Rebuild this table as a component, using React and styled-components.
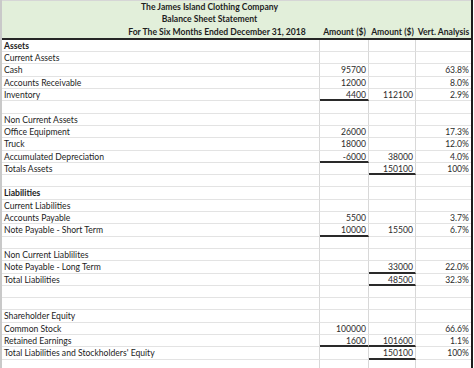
import * as React from 'react';
import styled, { createGlobalStyle } from 'styled-components';

const GlobalStyle = createGlobalStyle`
  html, body {
    margin: 0;
    padding: 0;
    background: #ffffff;
    overflow: hidden;
  }
  * { box-sizing: border-box; }
`;

const COLS = '318px 49px 47px 55px';

const Sheet = styled.div`
  width: 473px;
  border-left: 2px solid #c9c9c9;
  border-right: 2px solid #1c1c1c;
  font-family: Lato, "Liberation Sans", sans-serif;
  font-size: 8.6px;
  color: #1e1e1e;
`;

const Header = styled.div`
  background: #e2efda;
  border-top: 1px solid #d6d6d6;
  border-bottom: 2px solid #262626;
  font-weight: 700;
`;

const HeaderRow = styled.div`
  display: grid;
  grid-template-columns: ${COLS};
  height: 12.3px;
  padding-top: 1.2px;
  line-height: 11.1px;
`;

const Title = styled.div`
  grid-column: 1 / 2;
  text-align: center;
  padding-left: ${p => p.$shift}px;
  white-space: nowrap;
`;

const ColHead = styled.div`
  text-align: center;
  white-space: nowrap;
  overflow: visible;
`;

const Row = styled.div`
  display: grid;
  grid-template-columns: ${COLS};
  height: 12.3px;
`;

const Cell = styled.div`
  height: 12.3px;
  padding-top: 1px;
  line-height: 10.3px;
  padding-left: ${p => (p.$num ? '0' : '2px')};
  padding-right: ${p => (p.$num ? '2px' : '0')};
  text-align: ${p => (p.$num ? 'right' : 'left')};
  font-weight: ${p => (p.$bold ? 700 : 400)};
  color: ${p => (p.$num ? '#2b2b2b' : '#1c1c1c')};
  white-space: nowrap;
  border-bottom: ${p => (p.$under ? '2px solid #2a2a2a' : '1px solid #e3e3e3')};
  border-right: ${p => (p.$last ? 'none' : '1px solid #d8d8d8')};
`;

const rows = [
  { a: 'Assets', bold: true },
  { a: 'Current Assets' },
  { a: 'Cash', b: '95700', d: '63.8%' },
  { a: 'Accounts Receivable', b: '12000', d: '8.0%' },
  { a: 'Inventory', b: '4400', c: '112100', d: '2.9%', ub: true },
  {},
  { a: 'Non Current Assets' },
  { a: 'Office Equipment', b: '26000', d: '17.3%' },
  { a: 'Truck', b: '18000', d: '12.0%' },
  { a: 'Accumulated Depreciation', b: '-6000', c: '38000', d: '4.0%', ub: true },
  { a: 'Totals Assets', c: '150100', d: '100%', uc: true },
  {},
  { a: 'Liabilities', bold: true },
  { a: 'Current Liabilities' },
  { a: 'Accounts Payable', b: '5500', d: '3.7%' },
  { a: 'Note Payable - Short Term', b: '10000', c: '15500', d: '6.7%', ub: true },
  {},
  { a: 'Non Current Liablilites' },
  { a: 'Note Payable - Long Term', c: '33000', d: '22.0%', uc: true },
  { a: 'Total Liabilities', c: '48500', d: '32.3%', uc: true },
  {},
  {},
  { a: 'Shareholder Equity' },
  { a: 'Common Stock', b: '100000', d: '66.6%' },
  { a: 'Retained Earnings', b: '1600', c: '101600', d: '1.1%', ub: true, uc: true },
  { a: "Total Liabilities and Stockholders' Equity", c: '150100', d: '100%', uc: true },
  {},
];

export default function App() {
  return (
    <>
      <GlobalStyle />
      <Sheet>
        <Header>
          <HeaderRow>
            <Title $shift={97}>The James Island Clothing Company</Title>
          </HeaderRow>
          <HeaderRow>
            <Title $shift={97}>Balance Sheet Statement</Title>
          </HeaderRow>
          <HeaderRow>
            <Title $shift={112}>For The Six Months Ended December 31, 2018</Title>
            <ColHead>Amount ($)</ColHead>
            <ColHead>Amount ($)</ColHead>
            <ColHead>Vert. Analysis</ColHead>
          </HeaderRow>
        </Header>
        {rows.map((r, i) => (
          <Row key={i}>
            <Cell $bold={r.bold}>{r.a}</Cell>
            <Cell $num $under={r.ub}>{r.b}</Cell>
            <Cell $num $under={r.uc}>{r.c}</Cell>
            <Cell $num $last>{r.d}</Cell>
          </Row>
        ))}
      </Sheet>
    </>
  );
}
